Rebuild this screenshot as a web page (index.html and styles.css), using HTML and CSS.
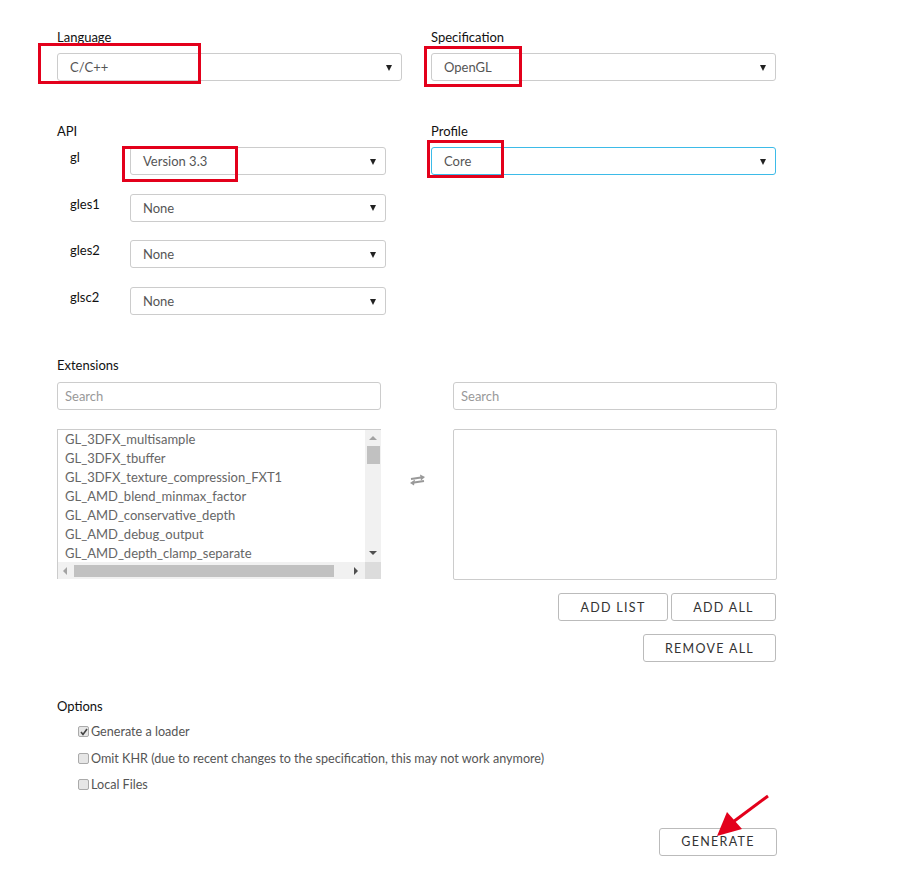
FILE: index.html
```html
<!DOCTYPE html>
<html>
<head>
<meta charset="utf-8">
<link rel="stylesheet" href="styles.css">
</head>
<body>
<div class="page">
  <div class="cols">
    <div class="field">
      <div class="label">Language</div>
      <div class="select"><span>C/C++</span><span class="caret"></span></div>
    </div>
    <div class="field">
      <div class="label">Specification</div>
      <div class="select"><span>OpenGL</span><span class="caret"></span></div>
    </div>
  </div>

  <div class="cols api">
    <div class="field">
      <div class="label">API</div>
      <div class="apirows">
        <div class="apirow"><div class="apilabel">gl</div><div class="select narrow"><span>Version 3.3</span><span class="caret"></span></div></div>
        <div class="apirow"><div class="apilabel">gles1</div><div class="select narrow"><span>None</span><span class="caret"></span></div></div>
        <div class="apirow"><div class="apilabel">gles2</div><div class="select narrow"><span>None</span><span class="caret"></span></div></div>
        <div class="apirow"><div class="apilabel">glsc2</div><div class="select narrow"><span>None</span><span class="caret"></span></div></div>
      </div>
    </div>
    <div class="field">
      <div class="label">Profile</div>
      <div class="apirows">
        <div class="select focus"><span>Core</span><span class="caret"></span></div>
      </div>
    </div>
  </div>

  <div class="ext">
    <div class="label">Extensions</div>
    <div class="extgrid">
      <div class="input">Search</div>
      <div></div>
      <div class="input">Search</div>
      <div class="listbox">
        <div class="items">
          <div>GL_3DFX_multisample</div>
          <div>GL_3DFX_tbuffer</div>
          <div>GL_3DFX_texture_compression_FXT1</div>
          <div>GL_AMD_blend_minmax_factor</div>
          <div>GL_AMD_conservative_depth</div>
          <div>GL_AMD_debug_output</div>
          <div>GL_AMD_depth_clamp_separate</div>
        </div>
        <div class="vbar">
          <span class="arr up"></span>
          <span class="vthumb"></span>
          <span class="arr down"></span>
        </div>
        <div class="hbar">
          <span class="arr left"></span>
          <span class="hthumb"></span>
          <span class="arr right"></span>
        </div>
        <div class="corner"></div>
      </div>
      <div class="swap">
        <svg width="17" height="12" viewBox="0 0 17 12">
          <path d="M2 5 L12 3.5" fill="none" stroke="#999" stroke-width="2.2"/>
          <path d="M11 0.5 L16 3 L12 6.5 Z" fill="#999"/>
          <path d="M15 7 L5 8.5" fill="none" stroke="#999" stroke-width="2.2"/>
          <path d="M6 5.5 L1 9 L5 11.5 Z" fill="#999"/>
        </svg>
      </div>
      <div class="selbox"></div>
      <div></div><div></div>
      <div class="btns">
        <div class="btnrow"><div class="btn w110">Add list</div><div class="btn w105">Add all</div></div>
        <div class="btnrow"><div class="btn w133">Remove all</div></div>
      </div>
    </div>
  </div>

  <div class="options">
    <div class="label">Options</div>
    <div class="opt"><span class="cb checked"><svg width="8" height="8" viewBox="0 0 8 8"><path d="M1 4 L3 6.5 L7 1" fill="none" stroke="#444" stroke-width="1.6"/></svg></span>Generate a loader</div>
    <div class="opt"><span class="cb"></span>Omit KHR (due to recent changes to the specification, this may not work anymore)</div>
    <div class="opt"><span class="cb"></span>Local Files</div>
  </div>

  <div class="genrow"><div class="btn gen">Generate</div></div>
</div>

<div class="mark m1"></div>
<div class="mark m2"></div>
<div class="mark m3"></div>
<div class="mark m4"></div>
<svg class="arrow" width="920" height="871" viewBox="0 0 920 871">
  <line x1="768" y1="796" x2="733" y2="822" stroke="#e3001b" stroke-width="3"/>
  <polygon points="717,836 727,812 742,829" fill="#e3001b"/>
</svg>
</body>
</html>
```

FILE: styles.css
```css
html, body {
  margin: 0;
  padding: 0;
  background: #fff;
}
body {
  font-family: "Lato", "Open Sans", sans-serif;
  font-size: 13px;
  color: #333;
  width: 920px;
  height: 871px;
  position: relative;
  overflow: hidden;
}
.page {
  width: 720px;
  margin-left: 57px;
  padding-top: 28px;
}
.label {
  height: 18px;
  line-height: 18px;
  color: #111;
  font-weight: normal;
}
.cols {
  display: grid;
  grid-template-columns: 345px 345px;
  column-gap: 29px;
}
.field .label {
  margin-bottom: 7px;
}
.select {
  height: 28px;
  box-sizing: border-box;
  border: 1px solid #ccc;
  border-radius: 3px;
  padding: 0 12px;
  display: flex;
  align-items: center;
  justify-content: space-between;
  color: #555;
}
.select.focus {
  border-color: #3dbbe8;
}
.caret {
  width: 0;
  height: 0;
  border-left: 3.5px solid transparent;
  border-right: 3.5px solid transparent;
  border-top: 6px solid #222;
  margin-right: -3px;
  margin-top: 1px;
}
.api {
  margin-top: 41px;
}
.apirows {
  display: flex;
  flex-direction: column;
  row-gap: 18.7px;
  margin-top: 1px;
}
.apirow {
  display: flex;
  padding-left: 13px;
}
.apilabel {
  width: 60px;
  padding-top: 1px;
  line-height: 18px;
  color: #111;
}
.select.narrow {
  width: 256px;
}
.ext {
  margin-top: 41px;
}
.ext .label {
  margin-bottom: 8px;
}
.extgrid {
  display: grid;
  grid-template-columns: 324px 72px 324px;
  row-gap: 19px;
}
.input {
  height: 28px;
  box-sizing: border-box;
  border: 1px solid #ccc;
  border-radius: 3px;
  padding: 0 7px;
  line-height: 26px;
  color: #999;
}
.listbox {
  height: 150px;
  box-sizing: border-box;
  border-top: 1px solid #ccc;
  border-left: 1px solid #ccc;
  display: grid;
  grid-template-columns: 1fr 16px;
  grid-template-rows: 1fr 17px;
  overflow: hidden;
}
.items {
  padding: 0 0 0 7px;
  line-height: 19px;
  color: #666;
  white-space: nowrap;
  overflow: hidden;
}
.vbar {
  background: #f1f1f1;
  position: relative;
}
.hbar {
  background: #f1f1f1;
  position: relative;
}
.corner {
  background: #dcdcdc;
}
.vthumb {
  position: absolute;
  left: 2px;
  right: 1px;
  top: 16px;
  height: 18px;
  background: #c1c1c1;
}
.hthumb {
  position: absolute;
  left: 16px;
  width: 260px;
  top: 3px;
  bottom: 2px;
  background: #c1c1c1;
}
.arr {
  position: absolute;
  width: 0;
  height: 0;
}
.arr.up {
  top: 6px;
  left: 4px;
  border-left: 4px solid transparent;
  border-right: 4px solid transparent;
  border-bottom: 4px solid #a3a3a3;
}
.arr.down {
  bottom: 7px;
  left: 4px;
  border-left: 4px solid transparent;
  border-right: 4px solid transparent;
  border-top: 4px solid #505050;
}
.arr.left {
  left: 5px;
  top: 5px;
  border-top: 4px solid transparent;
  border-bottom: 4px solid transparent;
  border-right: 4px solid #a3a3a3;
}
.arr.right {
  right: 7px;
  top: 5px;
  border-top: 4px solid transparent;
  border-bottom: 4px solid transparent;
  border-left: 4px solid #505050;
}
.swap {
  display: flex;
  align-items: flex-start;
  justify-content: center;
  padding-top: 45px;
}
.selbox {
  height: 151px;
  box-sizing: border-box;
  border: 1px solid #ccc;
  border-radius: 2px;
}
.btns {
  margin-top: -6px;
  display: flex;
  flex-direction: column;
  align-items: flex-end;
  row-gap: 13px;
}
.btnrow {
  display: flex;
  column-gap: 3px;
  margin-right: 1px;
}
.btn {
  height: 28px;
  box-sizing: border-box;
  border: 1px solid #bbb;
  border-radius: 3px;
  display: flex;
  align-items: center;
  justify-content: center;
  text-transform: uppercase;
  letter-spacing: 1.3px;
  font-size: 12.5px;
  font-weight: normal;
  color: #333;
}
.w110 { width: 110px; }
.w105 { width: 105px; }
.w133 { width: 133px; }
.options {
  margin-top: 35px;
}
.opt {
  display: flex;
  align-items: center;
  margin-left: 21px;
  height: 18px;
  margin-top: 8.5px;
  color: #555;
  font-size: 12.6px;
}
.options .label {
  margin-bottom: -1px;
}
.cb {
  width: 9px;
  height: 9px;
  border: 1px solid #aaa;
  border-radius: 2px;
  background: #e6e6e6;
  margin-right: 2px;
  display: flex;
  align-items: center;
  justify-content: center;
}
.genrow {
  display: flex;
  justify-content: flex-end;
  margin-top: 34px;
}
.btn.gen {
  width: 118px;
}
.mark {
  position: absolute;
  box-sizing: border-box;
  border: 3px solid #e3001b;
}
.m1 { left: 38px; top: 43px; width: 163px; height: 41px; }
.m2 { left: 424px; top: 46px; width: 98px; height: 41px; }
.m3 { left: 122px; top: 146px; width: 116px; height: 36px; }
.m4 { left: 427px; top: 140px; width: 77px; height: 38px; }
.arrow {
  position: absolute;
  left: 0;
  top: 0;
  pointer-events: none;
}
```
